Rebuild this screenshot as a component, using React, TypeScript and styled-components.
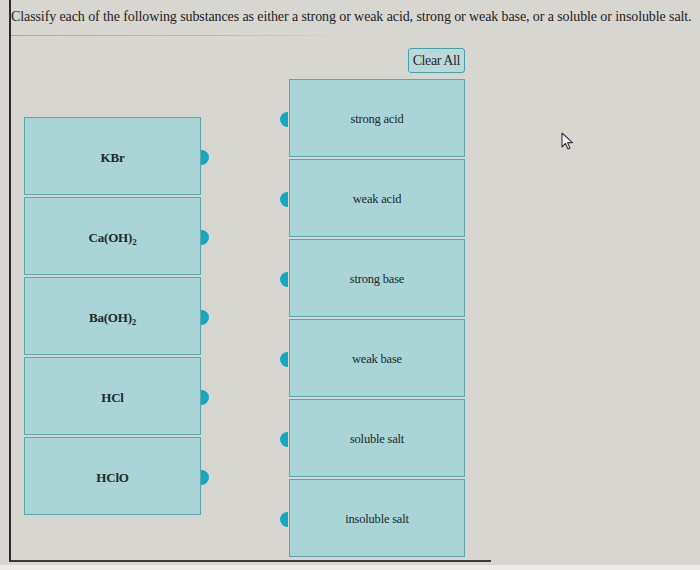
import React from "react";
import styled, { createGlobalStyle } from "styled-components";

const Global = createGlobalStyle`
  html, body {
    margin: 0;
    padding: 0;
    background: #ecebe7;
  }
`;

const serif = `"Liberation Serif", "DejaVu Serif", "Times New Roman", serif`;

const Screen = styled.div`
  width: 700px;
  height: 565px;
  background: #d7d6d0;
  position: relative;
  overflow: hidden;
  font-family: ${serif};
  color: #222;
`;

const Frame = styled.div`
  margin-left: 9px;
  width: 480px;
  height: 560px;
  border-left: 2px solid #2a2a2a;
  border-bottom: 2px solid #3a3a3a;
  display: flex;
  flex-direction: column;
`;

const Prompt = styled.p`
  margin: 0;
  padding: 8px 0 0 0;
  height: 19px;
  width: 700px;
  font-family: ${serif};
  font-size: 14px;
  line-height: 18px;
  letter-spacing: -0.1px;
  white-space: nowrap;
  color: #1e1e1e;
`;

const Divider = styled.div`
  margin-top: 8px;
  width: 340px;
  height: 1px;
  background: linear-gradient(to right, #9fb0b6, #b9c2c4 70%, rgba(200, 205, 205, 0));
`;

const Board = styled.div`
  display: flex;
  align-items: flex-start;
  padding-left: 13px;
`;

const Column = styled.div<{ $top: number; $width: number }>`
  display: flex;
  flex-direction: column;
  gap: 2px;
  margin-top: ${(p) => p.$top}px;
  width: ${(p) => p.$width}px;
`;

const TargetColumn = styled(Column)`
  margin-left: 88px;
`;

const ToolRow = styled.div`
  display: flex;
  justify-content: flex-end;
  margin-bottom: 4px;
`;

const ClearButton = styled.button`
  height: 25px;
  padding: 0 4px;
  background: #bcd9d9;
  border: 1.5px solid #3fa3ae;
  border-radius: 3px;
  font-family: ${serif};
  font-size: 14px;
  letter-spacing: -0.4px;
  color: #1f2b2e;
  cursor: pointer;
`;

const Card = styled.div<{ $bold?: boolean }>`
  position: relative;
  height: 78px;
  box-sizing: border-box;
  background: #a9d5d6;
  border: 1px solid #5ea7ae;
  display: flex;
  align-items: center;
  justify-content: center;
  font-family: ${serif};
  font-size: ${(p) => (p.$bold ? "13px" : "12.5px")};
  font-weight: ${(p) => (p.$bold ? 700 : 400)};
  letter-spacing: -0.2px;
  color: #23292b;
  padding-top: ${(p) => (p.$bold ? 4 : 2)}px;
`;

const Sub = styled.span`
  font-size: 9px;
  position: relative;
  top: 4px;
`;

const Nub = styled.span<{ $side: "left" | "right" }>`
  position: absolute;
  top: 50%;
  width: 8px;
  height: 15px;
  margin-top: -6px;
  background: #17a7c1;
  ${(p) =>
    p.$side === "right"
      ? `right: -9px; border-radius: 0 8px 8px 0;`
      : `left: -10px; border-radius: 8px 0 0 8px;`}
`;

const Pointer = styled.svg`
  position: absolute;
  left: 561px;
  top: 132px;
`;

type Item = { label: React.ReactNode; key: string };

const substances: Item[] = [
  { key: "kbr", label: "KBr" },
  {
    key: "caoh2",
    label: (
      <>
        Ca(OH)<Sub>2</Sub>
      </>
    ),
  },
  {
    key: "baoh2",
    label: (
      <>
        Ba(OH)<Sub>2</Sub>
      </>
    ),
  },
  { key: "hcl", label: "HCl" },
  { key: "hclo", label: "HClO" },
];

const categories = [
  "strong acid",
  "weak acid",
  "strong base",
  "weak base",
  "soluble salt",
  "insoluble salt",
];

export default function App() {
  return (
    <>
      <Global />
      <Screen>
        <Frame>
          <Prompt>
            Classify each of the following substances as either a strong or weak acid, strong or
            weak base, or a soluble or insoluble salt.
          </Prompt>
          <Divider />
          <Board>
            <Column $top={81} $width={177}>
              {substances.map((s) => (
                <Card key={s.key} $bold>
                  {s.label}
                  <Nub $side="right" />
                </Card>
              ))}
            </Column>
            <TargetColumn $top={12} $width={176}>
              <ToolRow>
                <ClearButton type="button">Clear All</ClearButton>
              </ToolRow>
              {categories.map((c) => (
                <Card key={c}>
                  {c}
                  <Nub $side="left" />
                </Card>
              ))}
            </TargetColumn>
          </Board>
        </Frame>
        <Pointer width="14" height="20" viewBox="0 0 14 20">
          <path
            d="M1 1 L1 15 L4.5 11.5 L7 17 L9 16 L6.6 10.6 L11.5 10.6 Z"
            fill="#f2f2f2"
            stroke="#3a3340"
            strokeWidth="1.1"
            strokeLinejoin="round"
          />
        </Pointer>
      </Screen>
    </>
  );
}
